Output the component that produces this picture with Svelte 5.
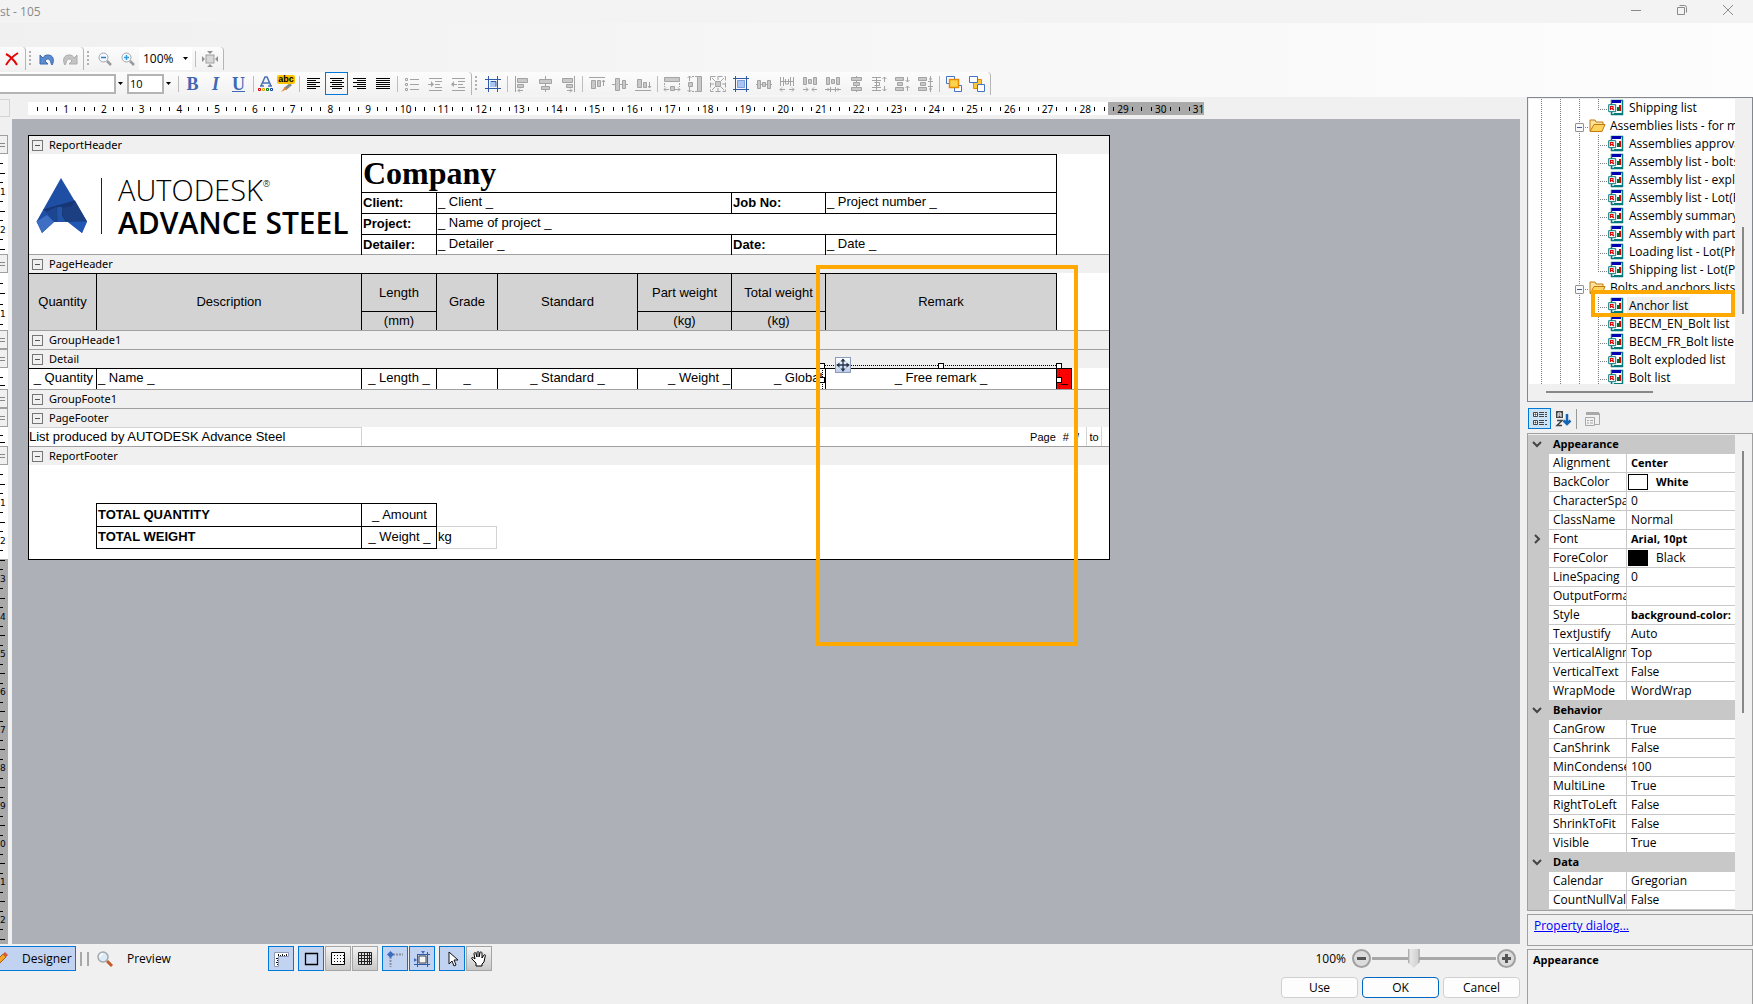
<script lang="ts">
	let zoom = 100;
	let selected = 'Anchor list';
	let mode = 'Designer';
	let align = 'align-center';

	const g = 'fill="#c9c9c9" stroke="#a3a3a3"';
	const l = 'fill="none" stroke="#a3a3a3"';
	const b = 'fill="none" stroke="#2f5aa8"';

	const icons: Record<string, string> = {
		delete: '<path d="M2 3 C6 5 10 9 13 14 M14 2 C9 5 5 9 2 14" fill="none" stroke="#e00808" stroke-width="2"/>',
		undo: '<path d="M1 4v9h8l-3-3c2-3 5-3 6 2l1 2c3-5 1-10-4-10-3 0-4 1-5 3z" fill="#5b8bd0" stroke="#3c68ad"/>',
		redo: '<path d="M15 4v9H7l3-3c-2-3-5-3-6 2l-1 2C0 9 2 4 7 4c3 0 4 1 5 3z" fill="#c4c4c4" stroke="#ababab"/>',
		'zoom-out':
			'<path d="M10 10l4 4" stroke="#9a9aa0" stroke-width="2.500"/><circle cx="6.500" cy="6.500" r="4.500" fill="#f6f9fd" stroke="#a0a4ae"/><path d="M4 6.500h5" stroke="#2f7fc0" stroke-width="1.500"/>',
		'zoom-in':
			'<path d="M10 10l4 4" stroke="#9a9aa0" stroke-width="2.500"/><circle cx="6.500" cy="6.500" r="4.500" fill="#f6f9fd" stroke="#a0a4ae"/><path d="M4 6.500h5M6.500 4v5" stroke="#2f9fe0" stroke-width="1.500"/>',
		fit: '<rect x="4" y="4" width="8" height="8" fill="#d8d8d8" stroke="#a0a0a0"/><path d="M5 0h6L8 3zM5 16h6l-3-3zM0 5v6l3-3zM16 5v6l-3-3z" fill="#8f8f8f"/>',
		color:
			'<path d="M3 10L7 1h2l4 9M5 7h6M2 10h4M10 10h4" fill="none" stroke="#4a72b8" stroke-width="1.600"/><path d="M.5 12.500h2v2h-2z" fill="#fff" stroke="#e00000"/><path d="M4.500 12.500h2v2h-2z" fill="#fff" stroke="#e0a800"/><path d="M8.500 12.500h2v2h-2z" fill="#fff" stroke="#0a8a0a"/><path d="M12.500 12.500h2v2h-2z" fill="#fff" stroke="#1040b0"/>',
		'align-left': '<path d="M1 2.500h13M1 4.500h9M1 6.500h13M1 8.500h9M1 10.500h13M1 12.500h9" stroke="#000"/>',
		'align-center': '<path d="M1 2.500h14M3 4.500h10M1 6.500h14M3 8.500h10M1 10.500h14M3 12.500h10" stroke="#000"/>',
		'align-right': '<path d="M1 2.500h13M5 4.500h9M1 6.500h13M5 8.500h9M1 10.500h13M5 12.500h9" stroke="#000"/>',
		justify: '<path d="M1 2.500h14M1 4.500h14M1 6.500h14M1 8.500h14M1 10.500h14M1 12.500h14" stroke="#000"/>',
		list: `<path d="M1.500 2.500h2v2h-2zM1.500 7.500h2v2h-2zM1.500 12.500h2v2h-2zM6 3.500h9M6 8.500h9M6 13.500h9" ${l}/>`,
		indent: `<path d="M2 2.500h13M8 5.500h7M8 8.500h5M8 11.500h7M2 14.500h13M1 8.500h5" ${l}/><path d="M4 5v6l3-2.500z" fill="#a3a3a3"/>`,
		outdent: `<path d="M2 2.500h13M8 5.500h7M8 8.500h5M8 11.500h7M2 14.500h13M3 8.500h4" ${l}/><path d="M4 5v6L1 8.500z" fill="#a3a3a3"/>`,
		snap: `<rect x="5" y="5" width="6" height="6" fill="#a9c4f0"/><path d="M0 3.500h16M0 12.500h16M3.500 0v16M12.500 0v16" ${b}/><path d="M6 5.500h5v5" ${b}/>`,
		'edge-left': `<path d="M1.500 0v16" ${l}/><path d="M3.500 2.500h10v4h-10zM3.500 8.500h6v3h-6z" ${g}/><path d="M4 14.500h5M6 12.500l-2 2 2 2" ${l}/>`,
		'edge-center': `<path d="M8.500 0v16" ${l}/><path d="M2.500 3.500h12v4h-12zM4.500 10.500h8v3h-8z" ${g}/>`,
		'edge-right': `<path d="M14.500 0v16" ${l}/><path d="M2.500 2.500h10v4h-10zM6.500 8.500h6v3h-6z" ${g}/><path d="M7 14.500h5M10 12.500l2 2-2 2" ${l}/>`,
		'edge-top': `<path d="M0 1.500h16M14.500 4v6M13 6l1.500-2L16 6" ${l}/><path d="M2.500 4.500h4v8h-4zM8.500 4.500h3v6h-3z" ${g}/>`,
		'edge-middle': `<path d="M0 8.500h16" ${l}/><path d="M3.500 2.500h4v12h-4zM10.500 4.500h3v8h-3z" ${g}/>`,
		'edge-bottom': `<path d="M0 14.500h16M14.500 6v6M13 10l1.500 2 1.500-2" ${l}/><path d="M2.500 3.500h4v8h-4zM8.500 6.500h3v5h-3z" ${g}/>`,
		'same-width': `<path d="M.5 1.500h15v4h-15z" ${g}/><path d="M.5 7v4M15.500 7v4" ${l} stroke-dasharray="2 1"/><path d="M6.500 10.500h4v4h-4z" ${g}/><path d="M0 13.500h5M11 13.500h5M2 11.500l-2 2 2 2M14 11.500l2 2-2 2" ${l}/>`,
		'same-height': `<path d="M10.500.5h4v15h-4z" ${g}/><path d="M5 .5h5M5 15.500h5" ${l} stroke-dasharray="2 1"/><path d="M1.500 6.500h4v4h-4z" ${g}/><path d="M2.500 0v5M2.500 11v5M.5 2l2-2 2 2M.5 14l2 2 2-2" ${l}/>`,
		'same-size': `<path d="M.5.5h15v15H.5z" ${l} stroke-dasharray="5 2"/><path d="M5.500 5.500h5v5h-5z" ${g}/><path d="M2 2l3 3M14 2l-3 3M2 14l3-3M14 14l-3-3M1 8h3M12 8h3M8 1v3M8 12v3" ${l}/>`,
		'fit-grid': `<rect x="4" y="4" width="8" height="8" fill="#a9c4f0"/><path d="M0 2.500h16M0 13.500h16M2.500 0v16M13.500 0v16" ${b}/><path d="M4.500 4.500h7v7h-7z" fill="none" stroke="#7ba0dc"/>`,
		'h-same': `<path d="M0 8.500h16" ${l}/><path d="M1.500 4.500h3v8h-3zM6.500 6.500h3v4h-3zM11.500 4.500h3v8h-3z" ${g}/>`,
		'h-more': `<path d="M1.500 1v9M14.500 1v9M4.500 1v9M11.500 1v9M1 5.500h14M6.500 3v5h3V3M1 13.500h5M10 13.500h5M3 11.500l-2 2 2 2M13 11.500l2 2-2 2" ${l}/>`,
		'h-less': `<path d="M1.500 1.500h3v7h-3zM6.500 3.500h3v4h-3zM11.500 1.500h3v7h-3z" ${g}/><path d="M1 13.500h5M10 13.500h5M4 11.500l2 2-2 2M12 11.500l-2 2 2 2" ${l}/>`,
		'h-none': `<path d="M1.500 1.500h3v7h-3zM6.500 3.500h3v4h-3zM11.500 1.500h3v7h-3z" ${g}/><path d="M0 13.500h16M5.500 11v5M10.500 11v5M3 12v3M13 12v3" ${l}/>`,
		'v-same': `<path d="M8.500 0v16" ${l}/><path d="M3.500 1.500h10v3h-10zM5.500 6.500h6v3h-6zM3.500 11.500h10v3h-10z" ${g}/>`,
		'v-more': `<path d="M1 1.500h9M1 14.500h9M1 4.500h9M1 11.500h9M5.500 1v14M3.500 6.500h5v3h-5M13.500 1v5M13.500 10v5M11.500 3l2-2 2 2M11.500 13l2 2 2-2" ${l}/>`,
		'v-less': `<path d="M1.500 1.500h8v3h-8zM3.500 6.500h5v3h-5zM1.500 11.500h8v3h-8z" ${g}/><path d="M13.500 1v5M13.500 10v5M11.500 4l2 2 2-2M11.500 12l2-2 2 2" ${l}/>`,
		'v-none': `<path d="M1.500 1.500h8v3h-8zM3.500 6.500h5v3h-5zM1.500 11.500h8v3h-8z" ${g}/><path d="M13.500 0v16M11 5.500h5M11 10.500h5M12 3h3M12 13h3" ${l}/>`,
		front:
			'<path d="M.5.5h8v7h-8zM8.500 9.500h7v6h-7z" fill="#fff" stroke="#4472c4"/><path d="M3.500 3.500h9v8h-9z" fill="#fcd34d" stroke="#e58a00" stroke-width="1.500"/>',
		back: '<path d="M4.500 3.500h8v9h-8z" fill="#fcc93d" stroke="#e58a00"/><path d="M.5.5h8v6h-8zM8.500 8.500h7v7h-7z" fill="#fff" stroke="#4472c4"/>',
		report:
			'<path d="M3.500.500h11v14h-11z" fill="#fff" stroke="#007a7a" stroke-width="1.500"/><path d="M4 0h9v3H4z" fill="#0000b0"/><path d="M.7 4.700h7v7h-7z" fill="#fff" stroke="#007a7a"/><path d="M2.500 10V6.500h2.500v2H3M4 8.500L6 10" fill="none" stroke="#e00000" stroke-width="1.200"/><path d="M9 7h2v4H9z" fill="#006b2d"/><path d="M11 5h2v6h-2z" fill="#e00000"/><path d="M6 13.500h8" stroke="#007a7a"/>',
		folder:
			'<path d="M1 13V2h5l1 2h7v3" fill="#ffe39b" stroke="#c07a10"/><path d="M1 13.500L5 6.500h11l-3 7z" fill="#ffd35c" stroke="#c07a10"/>',
		categorized:
			'<path d="M1.500 1.500h4v4h-4zM1.500 9.500h4v4h-4zM3.500 2.500v2M2.500 3.500h2M3.500 10.500v2M2.500 11.500h2" fill="#fff" stroke="#444"/><path d="M7 1.500h5M7 3.500h5M7 5.500h5M7 9.500h5M7 11.500h5M7 13.500h5M13 1.500h2M13 3.500h2M13 5.500h2M13 9.500h2M13 13.500h2" stroke="#444"/>',
		sorted:
			'<path d="M1 0h7v7H1z" fill="#444"/><path d="M3 6V2h3v4M3 4h3" fill="none" stroke="#fff"/><path d="M2 9.500h5L2 14.500h5" fill="none" stroke="#444" stroke-width="1.500"/><path d="M12 3v10M8.500 9.500L12 13l3.500-3.500" fill="none" stroke="#1565b5" stroke-width="2.500"/>',
		pages: '<path d="M4.500 2.500h11v11h-5" fill="none" stroke="#a8a8a8"/><path d="M2 1h13v3H2z" fill="#a8a8a8"/><path d="M1.500 6.500h9v8h-9z" fill="#f0f0f0" stroke="#a8a8a8"/><path d="M3 9.500h2M6 9.500h3M3 12h2M6 12h3" stroke="#a8a8a8"/>',
		pencil: '<path d="M1 15l2-5 7-7 3 3-7 7z" fill="#f5a32a" stroke="#a36410"/><path d="M10 3l2-2 3 3-2 2z" fill="#d9593c"/><path d="M1 15l1-3 2 2z" fill="#333"/>',
		search:
			'<path d="M10 10l5 5" stroke="#c25a2a" stroke-width="3"/><circle cx="6" cy="6" r="5" fill="#dcebf5" stroke="#a2a9ae" stroke-width="1.500"/><path d="M3 6a3 3 0 0 1 3-3" fill="none" stroke="#fff" stroke-width="1.500"/>',
		rulers:
			'<path d="M1.500 1.500h14v4h-10v10h-4z" fill="#fff" stroke="#8c98b4"/><path d="M5.500 5v-2M7.500 5V4M9.500 5V3M11.500 5V4M13.500 5V3M5 7.500H3M5 9.500H4M5 11.500H3M5 13.500H4" stroke="#111"/>',
		page: '<path d="M2.500 2.500h12v11h-12z" fill="none" stroke="#000" stroke-width="1.300"/>',
		dots: '<path d="M1.500 1.500h13v12h-13z" fill="#f8f8f8" stroke="#000"/><path d="M4 4.500h10M4 7.500h10M4 10.500h10" stroke="#000" stroke-dasharray="1 2"/>',
		grid: '<path d="M1.500 1.500h13v12h-13zM4.500 1v13M7.500 1v13M10.500 1v13M12.500 1v13M1 4.500h14M1 7.500h14M1 10.500h14" fill="#ddd" stroke="#222"/>',
		guides: '<path d="M3 3.500h13M3.500 3v13" stroke="#8890a0" stroke-width="2" stroke-dasharray="2 1"/><path d="M3.500 0L7 3.500 3.500 7 0 3.500z" fill="#3b6cc0"/>',
		frame: `<path d="M5 5h7v7H5z" fill="#f5f5f5" stroke="#444"/><path d="M0 13.500h16M13.500 1v15M3.500 3v13M3 3.500h13" ${b}/><path d="M7 0h4L9 3zM0 7v4l3-2z" fill="#3b6cc0"/>`,
		pointer: '<path d="M5 1v12l3-3 2 5 2-1-2-5h4z" fill="#fff" stroke="#111"/>',
		hand: '<path d="M5 15v-3L1 8c-1-2 1-2 3 0L3 3c0-2 2-2 2 0l1 3V2c0-2 2-2 2 0v4l1-4c0-2 2-1 2 0v5l2-3c1-1 2 0 1 2l-1 5-2 2v2z" fill="#fff" stroke="#000"/>',
		move: '<path d="M8 1v14M1 8h14" stroke="#26364f" stroke-width="1.500"/><path d="M5 4l3-3.500L11 4zM5 12l3 3.500 3-3.500zM4 5L.5 8 4 11zM12 5l3.500 3-3.500 3z" fill="#26364f"/>'
	};

	const alignTools = [
		['edge-left', 'edge-center', 'edge-right'],
		['edge-top', 'edge-middle', 'edge-bottom'],
		['same-width', 'same-height', 'same-size', 'fit-grid', 'h-same', 'h-more', 'h-less', 'h-none', 'v-same', 'v-more', 'v-less', 'v-none'],
		['front', 'back']
	];

	let viewTools = [
		[{ icon: 'rulers', on: true }],
		[
			{ icon: 'page', on: true },
			{ icon: 'dots', on: false },
			{ icon: 'grid', on: false }
		],
		[
			{ icon: 'guides', on: true },
			{ icon: 'frame', on: true }
		],
		[
			{ icon: 'pointer', on: true },
			{ icon: 'hand', on: false }
		]
	];

	// marks per band on the vertical ruler, four to a centimetre
	const bands = [
		{ marks: 10, size: 100 },
		{ marks: 5, size: 57 },
		{ marks: 0, size: 0 },
		{ marks: 2, size: 21 },
		{ marks: 0, size: 0 },
		{ marks: 2, size: 19 },
		{ marks: 50, size: 479 }
	];

	const tree = [
		{ label: 'Shipping list', last: true },
		{ label: 'Assemblies lists - for multiple', folder: true },
		{ label: 'Assemblies approval list' },
		{ label: 'Assembly list - bolts' },
		{ label: 'Assembly list - exploded' },
		{ label: 'Assembly list - Lot(Phase)' },
		{ label: 'Assembly summary list' },
		{ label: 'Assembly with parts list' },
		{ label: 'Loading list - Lot(Phase)' },
		{ label: 'Shipping list - Lot(Phase)', last: true },
		{ label: 'Bolts and anchors lists', folder: true },
		{ label: 'Anchor list' },
		{ label: 'BECM_EN_Bolt list' },
		{ label: 'BECM_FR_Bolt liste' },
		{ label: 'Bolt exploded list' },
		{ label: 'Bolt list' }
	];

	let groups = [
		{
			name: 'Appearance',
			open: true,
			rows: [
				{ name: 'Alignment', value: 'Center', bold: true },
				{ name: 'BackColor', value: 'White', bold: true, swatch: 'white' },
				{ name: 'CharacterSpacing', value: '0' },
				{ name: 'ClassName', value: 'Normal' },
				{ name: 'Font', value: 'Arial, 10pt', bold: true, nested: true },
				{ name: 'ForeColor', value: 'Black', swatch: 'black' },
				{ name: 'LineSpacing', value: '0' },
				{ name: 'OutputFormat', value: '' },
				{ name: 'Style', value: 'background-color:', bold: true },
				{ name: 'TextJustify', value: 'Auto' },
				{ name: 'VerticalAlignment', value: 'Top' },
				{ name: 'VerticalText', value: 'False' },
				{ name: 'WrapMode', value: 'WordWrap' }
			]
		},
		{
			name: 'Behavior',
			open: true,
			rows: [
				{ name: 'CanGrow', value: 'True' },
				{ name: 'CanShrink', value: 'False' },
				{ name: 'MinCondenseRate', value: '100' },
				{ name: 'MultiLine', value: 'True' },
				{ name: 'RightToLeft', value: 'False' },
				{ name: 'ShrinkToFit', value: 'False' },
				{ name: 'Visible', value: 'True' }
			]
		},
		{
			name: 'Data',
			open: true,
			rows: [
				{ name: 'Calendar', value: 'Gregorian' },
				{ name: 'CountNullValues', value: 'False' }
			]
		}
	];
</script>

{#snippet icon(name)}
	<svg class="icon" viewBox="0 0 16 16" width="16" height="16" aria-hidden="true">{@html icons[name]}</svg>
{/snippet}

{#snippet band(name)}
	<h2 class="band"><button type="button" aria-label="Collapse {name}"></button>{name}</h2>
{/snippet}

{#snippet arrow()}
	<svg class="arrow" width="5" height="3" aria-hidden="true"><path d="M0 0h5L2.500 3z" /></svg>
{/snippet}

<div class="window">
	<header class="title">
		<span class="caption">st - 105</span>
		<div class="controls">
			<button type="button" aria-label="Minimize"><svg width="12" height="12"><path d="M1 6.500h10" /></svg></button>
			<button type="button" aria-label="Restore">
				<svg width="12" height="12"><path d="M1.500 3.500h7v7h-7zM3.500 1.500h5a2 2 0 0 1 2 2v5" /></svg>
			</button>
			<button type="button" aria-label="Close"><svg width="12" height="12"><path d="M1 1l10 10M11 1L1 11" /></svg></button>
		</div>
	</header>

	<div class="toolbars">
		<div class="toolbar">
			<div class="tools first">
				<button type="button" aria-label="Delete">{@render icon('delete')}</button>
			</div>
			<div class="tools">
				<button type="button" aria-label="Undo">{@render icon('undo')}</button>
				<button type="button" aria-label="Redo">{@render icon('redo')}</button>
			</div>
			<div class="tools">
				<button type="button" aria-label="Zoom out">{@render icon('zoom-out')}</button>
				<button type="button" aria-label="Zoom in">{@render icon('zoom-in')}</button>
				<div class="combo zoom-combo">
					<select aria-label="Zoom"><option>100%</option></select>{@render arrow()}
				</div>
				<i class="sep"></i>
				<button type="button" aria-label="Fit">{@render icon('fit')}</button>
			</div>
		</div>
		<div class="toolbar">
			<div class="tools format">
				<div class="combo font-combo">
					<select aria-label="Font name"><option></option></select>{@render arrow()}
				</div>
				<div class="combo size-combo">
					<select aria-label="Font size"><option>10</option></select>{@render arrow()}
				</div>
				<i class="sep"></i>
				<button type="button" class="letter">B</button>
				<button type="button" class="letter italic">I</button>
				<button type="button" class="letter under">U</button>
				<i class="sep"></i>
				<button type="button" class="slim" aria-label="Text color">{@render icon('color')}</button>
				<button type="button" class="slim mark"
					><span>abc</span><svg width="12" height="8"><path d="M11 0L5 5" stroke="#888" stroke-width="3" /><path d="M5 3l2 2-6 3z" fill="#e8872a" /></svg></button
				>
				<i class="sep"></i>
				{#each ['align-left', 'align-center', 'align-right', 'justify'] as name}
					<button type="button" class:active={align === name} aria-label={name} on:click={() => (align = name)}>{@render icon(name)}</button>
				{/each}
				<i class="sep"></i>
				{#each ['list', 'indent', 'outdent'] as name}
					<button type="button" aria-label={name}>{@render icon(name)}</button>
				{/each}
			</div>
			<div class="tools">
				<button type="button" aria-label="Snap to grid">{@render icon('snap')}</button>
				{#each alignTools as set}
					<i class="sep"></i>
					{#each set as name}
						<button type="button" aria-label={name}>{@render icon(name)}</button>
					{/each}
				{/each}
			</div>
		</div>
	</div>

	<div class="body">
		<main>
			<div class="ruler-row">
				<div class="corner"></div>
				<div class="ruler">
					{#each Array(124) as _, i}
						<span class="mark-h">
							{#if i % 4 === 3}{(i + 1) / 4}{:else}<i></i>{/if}
						</span>
					{/each}
				</div>
			</div>

			<div class="work">
				<div class="v-ruler">
					{#each bands as { marks, size }, n}
						<div class="v-head"></div>
						<div class="v-band" class:tail={n === 6} style="height: {size}px">
							{#each Array(marks) as _, i}
								<span class="mark-v">
									{#if i % 4 === 3}{((i + 1) / 4) % 10}{:else}<i class:long={i % 4 === 1}></i>{/if}
								</span>
							{/each}
						</div>
					{/each}
				</div>

				<div class="canvas">
					<div class="paper">
						{@render band('ReportHeader')}
						<section class="report-header">
							<div class="logo">
								<svg width="52" height="56" viewBox="0 0 52 56" aria-hidden="true">
									<path d="M25 0L51 43.500 46 55 32 44H18L6 55 .5 43.500z" fill="#1f4fa5" />
									<path d="M7 31.500L39 22.500 51 43.500 32 44 26 38 21 33z" fill="#1b3f80" />
									<path d="M7 31.500L39 22.500 36 28 26 30 27 39 32 44 18 39z" fill="#173774" />
									<path d="M10 34L20 29 22 35 29 44H18z" fill="#1c4690" />
									<path d="M21 29h5v9l4 6h-8z" fill="#2455a8" />
									<path d="M.5 43.500L11 37 18 44 6 55z" fill="#3f6fc4" />
									<path d="M32 44L51 43.500 46 55z" fill="#2258b4" />
								</svg>
								<i></i>
								<div class="brand"><span>AUTODESK<sup>®</sup></span><strong>ADVANCE STEEL</strong></div>
							</div>
							<table class="company">
								<colgroup><col class="w75" /><col class="w295" /><col class="w94" /><col class="w231" /></colgroup>
								<tbody>
									<tr class="name"><td colspan="4">Company</td></tr>
									<tr><th>Client:</th><td>_ Client _</td><th>Job No:</th><td>_ Project number _</td></tr>
									<tr><th>Project:</th><td colspan="3">_ Name of project _</td></tr>
									<tr><th>Detailer:</th><td>_ Detailer _</td><th>Date:</th><td>_ Date _</td></tr>
								</tbody>
							</table>
						</section>

						{@render band('PageHeader')}
						<table class="columns head">
							<colgroup>
								<col class="w67" /><col class="w265" /><col class="w75" /><col class="w61" /><col class="w140" /><col class="w94" /><col
									class="w94"
								/><col class="w231" />
							</colgroup>
							<thead>
								<tr class="tall">
									<th rowspan="2">Quantity</th>
									<th rowspan="2">Description</th>
									<th>Length</th>
									<th rowspan="2">Grade</th>
									<th rowspan="2">Standard</th>
									<th>Part weight</th>
									<th>Total weight</th>
									<th rowspan="2">Remark</th>
								</tr>
								<tr><th>(mm)</th><th>(kg)</th><th>(kg)</th></tr>
							</thead>
						</table>

						{@render band('GroupHeade1')}
						{@render band('Detail')}
						<table class="columns detail">
							<colgroup>
								<col class="w67" /><col class="w265" /><col class="w75" /><col class="w61" /><col class="w140" /><col class="w94" /><col
									class="w94"
								/><col class="w231" /><col class="w15" />
							</colgroup>
							<tbody>
								<tr>
									<td class="right">_ Quantity</td>
									<td class="left">_ Name _</td>
									<td>_ Length _</td>
									<td>_</td>
									<td>_ Standard _</td>
									<td class="right tight">_ Weight _</td>
									<td class="left cut">_ Global w</td>
									<td>_ Free remark _</td>
									<td class="red">_</td>
								</tr>
							</tbody>
						</table>

						{@render band('GroupFoote1')}
						{@render band('PageFooter')}
						<section class="page-footer">
							<span class="produced">List produced by AUTODESK Advance Steel</span>
							<span class="pager"><span>Page</span><span>#</span><span>/</span><span class="total">to</span></span>
						</section>

						{@render band('ReportFooter')}
						<section class="report-footer">
							<table class="totals">
								<colgroup><col class="w265" /><col class="w76" /><col class="w60" /></colgroup>
								<tbody>
									<tr><th>TOTAL QUANTITY</th><td>_ Amount</td></tr>
									<tr><th>TOTAL WEIGHT</th><td>_ Weight _</td><td class="unit">kg</td></tr>
								</tbody>
							</table>
						</section>

						<div class="selection">
							<i class="nw"></i><i class="n"></i><i class="ne"></i><i class="w"></i><i class="e"></i>
							<span class="mover">{@render icon('move')}</span>
						</div>
						<div class="callout"></div>
					</div>
				</div>
			</div>

			<footer>
				<div class="status">
					<button type="button" class="tab designer" class:current={mode === 'Designer'} on:click={() => (mode = 'Designer')}>
						{@render icon('pencil')}Designer
					</button>
					<i class="bar"></i><i class="bar"></i>
					<button type="button" class="tab preview" class:current={mode === 'Preview'} on:click={() => (mode = 'Preview')}>
						{@render icon('search')}Preview
					</button>
					<div class="view-tools">
						{#each viewTools as set}
							<div>
								{#each set as tool}
									<button type="button" class:on={tool.on} aria-label={tool.icon} on:click={() => (tool.on = !tool.on)}
										>{@render icon(tool.icon)}</button
									>
								{/each}
							</div>
						{/each}
					</div>
					<div class="zoom">
						<label for="zoom">{zoom}%</label>
						<button type="button" aria-label="Zoom out" on:click={() => (zoom -= 10)}></button>
						<input id="zoom" type="range" min="10" max="290" bind:value={zoom} />
						<button type="button" class="plus" aria-label="Zoom in" on:click={() => (zoom += 10)}></button>
					</div>
				</div>
				<div class="actions">
					<button type="button">Use</button>
					<button type="button" class="default">OK</button>
					<button type="button">Cancel</button>
				</div>
			</footer>
		</main>

		<aside>
			<div class="tree">
				<ul>
					{#each tree as { label, folder, last }}
						<li>
							<i class="guide"></i><i class="guide"></i>
							{#if folder}
								<i class="guide branch"><b></b></i>
							{:else}
								<i class="guide"></i><i class="guide branch" class:last></i>
							{/if}
							{@render icon(folder ? 'folder' : 'report')}
							<button type="button" class:selected={selected === label} on:click={() => (selected = label)}>{label}</button>
						</li>
					{/each}
				</ul>
				<i class="thumb-v"></i>
				<i class="thumb-h"></i>
				<div class="callout"></div>
			</div>

			<div class="prop-tools">
				<button type="button" class="active" aria-label="Categorized">{@render icon('categorized')}</button>
				<button type="button" aria-label="Alphabetical">{@render icon('sorted')}</button>
				<i></i>
				<button type="button" aria-label="Property pages">{@render icon('pages')}</button>
			</div>

			<div class="props">
				<table>
					<colgroup><col class="gutter" /><col class="names" /><col /></colgroup>
					<tbody>
						{#each groups as group}
							<tr class="group">
								<td>
									<button type="button" aria-label="Toggle {group.name}" on:click={() => (group.open = !group.open)}>
										<svg width="10" height="10"><path d="M1 3l4 4 4-4" /></svg>
									</button>
								</td>
								<th colspan="2">{group.name}</th>
							</tr>
							{#if group.open}
								{#each group.rows as row}
									<tr>
										<td>{#if row.nested}<svg width="10" height="10"><path d="M3 1l4 4-4 4" /></svg>{/if}</td>
										<th>{row.name}</th>
										<td class:bold={row.bold}>
											{#if row.swatch}<i class="swatch" style="background: {row.swatch}"></i>{/if}{row.value}
										</td>
									</tr>
								{/each}
							{/if}
						{/each}
					</tbody>
				</table>
				<i class="thumb-v"></i>
			</div>

			<div class="link-box"><a href="#properties">Property dialog...</a></div>
			<div class="help">Appearance</div>
		</aside>
	</div>
</div>

<style>
	:global(body) {
		margin: 0;
		overflow: hidden;
	}

	.window {
		display: flex;
		flex-direction: column;
		height: 100vh;
		background: #f0f0f0;
		color: #000;
		font: 12px/16px 'Open Sans', sans-serif;
	}

	.window :global(*) {
		box-sizing: border-box;
	}

	button,
	select,
	input {
		margin: 0;
		padding: 0;
		border: 0;
		background: none;
		color: inherit;
		font: inherit;
	}

	.icon {
		display: block;
		flex: none;
		overflow: visible;
	}

	/* title bar */
	.title {
		display: flex;
		flex: none;
		justify-content: space-between;
		height: 23px;
		background: #f3f3f3;
		color: #8a8a8a;
	}

	.caption {
		line-height: 24px;
	}

	.controls {
		display: flex;
		padding-right: 2px;
	}

	.controls button {
		display: grid;
		place-items: center;
		width: 46px;
		height: 20px;
	}

	.controls svg {
		fill: none;
		stroke: #8a8a8a;
	}

	/* toolbars */
	.toolbars {
		flex: none;
		height: 74px;
		padding-top: 24px;
		background: linear-gradient(90deg, #f0f0f0, #fdfdfd);
	}

	.toolbar {
		display: flex;
		height: 23px;
		margin-bottom: 2px;
	}

	.tools {
		display: flex;
		align-items: center;
		padding: 0 2px 0 9px;
		border-right: 1px solid #b5b5b5;
		border-radius: 0 4px 0 0;
		background:
			repeating-linear-gradient(#b0b0b0 0 2px, transparent 2px 4px) 3px 4px / 2px 14px no-repeat,
			linear-gradient(#fcfcfc, #f2f2f2);
	}

	.tools.first,
	.tools.format {
		padding-left: 0;
		background: linear-gradient(#fcfcfc, #f2f2f2);
	}

	.tools button {
		display: flex;
		align-items: center;
		justify-content: center;
		width: 23px;
		height: 23px;
	}

	.tools button.slim {
		width: 20px;
	}

	.tools button.active {
		border: 1px solid #0078d7;
	}

	.sep {
		flex: none;
		width: 1px;
		height: 16px;
		margin: 0 2px 0 3px;
		background: #bdbdbd;
	}

	.combo {
		display: flex;
		align-items: center;
	}

	.combo select {
		flex: 1;
		min-width: 0;
		height: 20px;
		padding-left: 1px;
		border: 2px solid #b4b4b4;
		appearance: none;
		background: #fff;
	}

	.arrow {
		margin: 0 4px 0 2px;
	}

	.zoom-combo {
		width: 53px;
		height: 23px;
		background: #fff;
	}

	.zoom-combo select {
		border: 0;
		padding-left: 4px;
	}

	.font-combo {
		width: 127px;
	}

	.font-combo select {
		border-left: 0;
	}

	.size-combo {
		width: 48px;
	}

	.size-combo select {
		font-size: 11px;
	}

	.tools button.letter {
		color: #3f68b4;
		font: bold 18px/20px 'Liberation Serif', serif;
	}

	.tools button.italic {
		font-style: italic;
	}

	.tools button.under {
		text-decoration: underline;
	}

	.tools button.mark {
		flex-direction: column;
	}

	.mark span {
		height: 9px;
		padding: 0 1px;
		border-radius: 2px;
		background: #ffc400;
		font: bold 9px/8px 'Liberation Sans', sans-serif;
	}

	/* layout of the two halves */
	.body {
		display: flex;
		flex: 1;
		min-height: 0;
	}

	main {
		display: flex;
		flex: 1;
		flex-direction: column;
		min-width: 0;
	}

	aside {
		display: flex;
		flex: none;
		flex-direction: column;
		width: 226px;
		margin-left: 7px;
	}

	/* rulers */
	.ruler-row {
		display: flex;
		flex: none;
		align-items: center;
		height: 22px;
	}

	.corner {
		width: 10px;
		height: 18px;
		margin-right: 18px;
		border: 1px solid #d4d4d4;
		border-left: 0;
	}

	.ruler {
		display: flex;
		width: 1176px;
		height: 13px;
		padding-left: 5px;
		background: linear-gradient(90deg, #fff 1080px, #a9a9a9 0);
		font: 10px/16px 'Noto Sans', sans-serif;
	}

	.mark-h {
		display: flex;
		flex: 1;
		align-items: center;
		justify-content: center;
		width: 0;
		height: 15px;
	}

	.mark-h i {
		width: 1px;
		height: 4px;
		background: #000;
	}

	.work {
		display: flex;
		flex: 1;
		min-height: 0;
	}

	.v-ruler {
		width: 8px;
		margin-right: 4px;
		padding-top: 16px;
		overflow: hidden;
		font: 9px/9px 'DejaVu Sans', sans-serif;
	}

	.v-head {
		height: 19px;
		border: solid #a0a0a0;
		border-width: 1px 1px 1px 0;
		background: linear-gradient(#888, #888) 0 7px / 5px 1px no-repeat, linear-gradient(#888, #888) 0 10px / 5px 1px no-repeat;
	}

	.v-band {
		display: flex;
		flex-direction: column;
		padding-top: 5px;
		background: #fff;
	}

	.v-band:empty {
		padding: 0;
	}

	.v-band.tail {
		background: linear-gradient(#fff 94px, #a9a9a9 0);
	}

	.mark-v {
		display: flex;
		flex: 1;
		align-items: center;
		height: 0;
	}

	.mark-v i {
		width: 3px;
		height: 1px;
		background: #000;
	}

	.mark-v i.long {
		width: 5px;
	}

	/* report page */
	.canvas {
		flex: 1;
		min-width: 0;
		padding: 16px;
		overflow: hidden;
		background: #adb1b7;
	}

	.paper {
		position: relative;
		width: 1082px;
		border: 1px solid #000;
		background: #fff;
		font: 13px/16px 'Liberation Sans', Arial, sans-serif;
	}

	.band {
		display: flex;
		align-items: center;
		height: 19px;
		margin: 0;
		padding-left: 3px;
		border-top: 1px solid #a0a0a0;
		background: #f0f0f0;
		font: 11px/16px 'Noto Sans', sans-serif;
	}

	.band:first-child {
		height: 18px;
		border-top: 0;
	}

	.band button {
		width: 11px;
		height: 11px;
		margin-right: 6px;
		border: 1px solid #777;
		background: linear-gradient(#555, #555) center / 5px 1px no-repeat;
	}

	table {
		border-spacing: 0;
		table-layout: fixed;
	}

	th,
	td {
		padding: 0;
		overflow: hidden;
		font-weight: normal;
		white-space: nowrap;
	}

	.w15 {
		width: 15px;
	}
	.w60 {
		width: 60px;
	}
	.w61 {
		width: 61px;
	}
	.w67 {
		width: 67px;
	}
	.w75 {
		width: 75px;
	}
	.w76 {
		width: 76px;
	}
	.w94 {
		width: 94px;
	}
	.w140 {
		width: 140px;
	}
	.w231 {
		width: 231px;
	}
	.w265 {
		width: 265px;
	}
	.w295 {
		width: 295px;
	}

	.report-header {
		display: flex;
		height: 100px;
	}

	.logo {
		display: flex;
		flex: none;
		align-items: center;
		width: 332px;
		padding: 4px 0 0 7px;
	}

	.logo i {
		width: 1px;
		height: 56px;
		margin: 0 16px 0 13px;
		background: #222;
	}

	.brand {
		font: 30px/33px 'Open Sans', sans-serif;
		white-space: nowrap;
	}

	.brand span {
		display: block;
		font-size: 29px;
		font-weight: 300;
	}

	.brand strong {
		font-weight: 600;
	}

	.brand sup {
		font-size: 9px;
		line-height: 0;
		vertical-align: 14px;
	}

	.company {
		width: 696px;
		height: 100px;
		border-right: 1px solid #000;
	}

	.company th,
	.company td {
		height: 21px;
		padding-left: 1px;
		border-top: 1px solid #000;
		border-left: 1px solid #000;
		text-align: left;
	}

	.company td {
		padding-bottom: 2px;
	}

	.company th {
		font-weight: bold;
	}

	.company .name td {
		height: 38px;
		font: bold 32px/34px 'Liberation Serif', serif;
	}

	.columns th,
	.columns td {
		border-top: 1px solid #000;
		border-left: 1px solid #000;
		text-align: center;
	}

	.columns th:first-child[rowspan],
	.columns td:first-child {
		border-left: 0;
	}

	.head {
		width: 1028px;
		border-right: 1px solid #000;
		background: #d3d3d3;
	}

	.head th {
		height: 19px;
	}

	.head .tall th {
		height: 38px;
	}

	.detail {
		width: 1043px;
		border-right: 1px solid #000;
	}

	.detail td {
		height: 21px;
		padding-bottom: 2px;
	}

	.detail .left {
		padding-left: 1px;
		text-align: left;
	}

	.detail .right {
		padding-right: 3px;
		text-align: right;
	}

	.detail .tight {
		padding-right: 1px;
	}

	.detail .cut {
		padding-left: 42px;
	}

	.detail .red {
		background: #f00;
	}

	.page-footer {
		display: flex;
		justify-content: space-between;
		height: 19px;
	}

	.produced {
		width: 333px;
		border: solid #d3d3d3;
		border-width: 1px 1px 0 0;
		line-height: 18px;
	}

	.pager {
		display: flex;
		gap: 7px;
		padding-right: 7px;
		font-size: 11px;
		line-height: 20px;
	}

	.pager .total {
		width: 16px;
		border: solid #d3d3d3;
		border-width: 0 1px;
		text-align: center;
	}

	.report-footer {
		padding: 38px 0 10px 67px;
	}

	.totals {
		width: 401px;
	}

	.totals th,
	.totals td {
		height: 23px;
		padding: 0 0 1px 1px;
		border-top: 1px solid #000;
		border-left: 1px solid #000;
		text-align: center;
	}

	.totals th {
		font-weight: bold;
		text-align: left;
	}

	.totals td:nth-child(2) {
		border-right: 1px solid #000;
	}

	.totals tr:last-child > * {
		border-bottom: 1px solid #000;
	}

	.totals tr:last-child .unit {
		border: 1px solid #d3d3d3;
		border-left: 0;
		text-align: left;
	}

	/* drawn over the page */
	.selection {
		position: absolute;
		top: 229px;
		left: 793px;
		width: 238px;
		height: 24px;
		border: 1px dotted #000;
		border-bottom: 0;
	}

	.selection i {
		position: absolute;
		width: 6px;
		height: 6px;
		border: 1px solid #000;
		background: #fff;
	}

	.nw,
	.n,
	.ne {
		top: -3px;
	}

	.w,
	.e {
		top: 11px;
	}

	.nw,
	.w {
		left: -4px;
	}

	.n {
		left: 115px;
	}

	.ne,
	.e {
		right: -3px;
	}

	.mover {
		position: absolute;
		top: -9px;
		left: 12px;
		border: 1px solid #8c9cb8;
		background: linear-gradient(#fff, #b9cbe8);
	}

	.mover .icon {
		width: 14px;
		height: 14px;
	}

	.callout {
		position: absolute;
		border: 4px solid #ffa900;
	}

	.paper .callout {
		top: 129px;
		left: 787px;
		width: 262px;
		height: 381px;
	}

	/* bottom bars */
	footer {
		flex: none;
		height: 60px;
	}

	.status {
		display: flex;
		align-items: center;
		height: 29px;
	}

	.tab {
		display: flex;
		align-items: center;
		height: 25px;
		gap: 14px;
	}

	.designer {
		gap: 13px;
		width: 76px;
		margin-right: 4px;
		border: 1px solid transparent;
		border-left: 0;
	}

	.designer .icon {
		margin-left: -7px;
	}

	.tab.current {
		border-color: #0078d7;
		background: #c1d3f0;
	}

	.bar {
		width: 2px;
		height: 14px;
		margin-right: 5px;
		background: #a8a8a8;
	}

	.preview {
		width: 73px;
		margin: 0 98px 0 3px;
	}

	.view-tools {
		display: flex;
		gap: 4px;
		margin-right: auto;
	}

	.view-tools div {
		display: flex;
		gap: 1px;
	}

	.view-tools button {
		display: grid;
		place-items: center;
		width: 26px;
		height: 25px;
		border: 1px solid #a5a5a5;
		background: linear-gradient(#f2f2f2, #c8c8c8);
	}

	.view-tools button.on {
		border-color: #0078d7;
		background: #c1d3f0;
	}

	.zoom {
		display: flex;
		align-items: center;
		padding-right: 4px;
	}

	.zoom label {
		margin-right: 6px;
	}

	.zoom button {
		width: 19px;
		height: 19px;
		border: 2px solid #a0a0a0;
		border-radius: 50%;
		background: linear-gradient(#555, #555) center / 9px 3px no-repeat, #dcdcdc;
	}

	.zoom .plus {
		background: linear-gradient(#555, #555) center / 9px 3px no-repeat, linear-gradient(#555, #555) center / 3px 9px no-repeat, #dcdcdc;
	}

	.zoom input {
		appearance: none;
		width: 126px;
		height: 19px;
		background: linear-gradient(#a8a8a8, #a8a8a8) center / 124px 3px no-repeat;
	}

	.zoom input::-webkit-slider-thumb {
		appearance: none;
		width: 12px;
		height: 19px;
		background: linear-gradient(90deg, #a0a0a0, #e6e6e6 20%, #d2d2d2 80%, #909090);
		clip-path: polygon(0 0, 100% 0, 100% 70%, 50% 100%, 0 70%);
	}

	.actions {
		display: flex;
		justify-content: flex-end;
		gap: 4px;
		padding-top: 4px;
	}

	.actions button {
		width: 77px;
		height: 21px;
		border: 1px solid #d0d0d0;
		border-radius: 4px;
		background: #fdfdfd;
	}

	.actions .default {
		border-color: #0067c0;
	}

	/* report tree */
	.tree {
		position: relative;
		flex: none;
		height: 305px;
		padding: 1px 17px 17px 1px;
		border: 1px solid #828790;
		overflow: hidden;
	}

	.tree ul {
		height: 285px;
		margin: 0;
		padding: 0 0 0 3px;
		overflow: hidden;
		background: #fff;
		list-style: none;
	}

	.tree li {
		display: flex;
		align-items: center;
		height: 18px;
	}

	.tree li button {
		flex: none;
		margin-left: 3px;
		padding: 0 2px;
		line-height: 18px;
		white-space: nowrap;
	}

	.tree li .selected {
		background: #f0f0f0;
	}

	.guide {
		position: relative;
		flex: none;
		width: 19px;
		height: 18px;
		background: repeating-linear-gradient(#808080 0 1px, transparent 1px 2px) 9px 0 / 1px 18px no-repeat;
	}

	.guide.branch {
		background:
			repeating-linear-gradient(#808080 0 1px, transparent 1px 2px) 9px 0 / 1px 18px no-repeat,
			repeating-linear-gradient(90deg, #808080 0 1px, transparent 1px 2px) 9px 10px / 10px 1px no-repeat;
	}

	.guide.last {
		background-size:
			1px 10px,
			10px 1px;
	}

	.guide b {
		position: absolute;
		top: 6px;
		left: 5px;
		width: 9px;
		height: 9px;
		border: 1px solid #919191;
		border-radius: 1px;
		background: linear-gradient(#3c5fa8, #3c5fa8) center / 5px 1px no-repeat, #fafafa;
	}

	.thumb-v,
	.thumb-h {
		position: absolute;
		background: #888;
	}

	.thumb-v {
		right: 8px;
		width: 2px;
	}

	.tree .thumb-v {
		top: 129px;
		height: 87px;
	}

	.thumb-h {
		bottom: 8px;
		left: 18px;
		width: 107px;
		height: 2px;
	}

	.tree .callout {
		top: 192px;
		right: 17px;
		left: 63px;
		height: 27px;
	}

	/* property grid */
	.prop-tools {
		display: flex;
		flex: none;
		align-items: center;
		height: 31px;
		padding: 2px 0 0 1px;
	}

	.prop-tools button {
		display: grid;
		place-items: center;
		width: 23px;
		height: 21px;
	}

	.prop-tools .active {
		border: 1px solid #0078d7;
		background: #cce4f7;
	}

	.prop-tools i {
		width: 1px;
		height: 20px;
		margin: 0 3px 0 2px;
		background: #999;
	}

	.props {
		position: relative;
		flex: 1;
		min-height: 0;
		padding: 1px 17px 0 0;
		border: 1px solid #a0a0a0;
		overflow: hidden;
	}

	.props table {
		width: 100%;
	}

	.gutter {
		width: 21px;
	}

	.names {
		width: 78px;
	}

	.props th,
	.props td {
		height: 19px;
		padding-left: 4px;
		border-bottom: 1px solid #c8c8c8;
		background: #fff;
		line-height: 18px;
		text-align: left;
	}

	.props th {
		border-right: 1px solid #c8c8c8;
	}

	.props td:first-child,
	.props .group th {
		background: #c8c8c8;
	}

	.props .group th,
	.props .bold,
	.help {
		font-weight: bold;
		font-size: 11px;
	}

	.props svg {
		display: block;
		fill: none;
		stroke: #444;
		stroke-width: 2;
	}

	.props button {
		display: block;
	}

	.swatch {
		display: inline-block;
		width: 20px;
		height: 16px;
		margin: 1px 8px 0 -3px;
		border: 1px solid #000;
		vertical-align: top;
	}

	.props .thumb-v {
		top: 17px;
		height: 262px;
	}

	.link-box,
	.help {
		flex: none;
		margin-top: 3px;
		border: 1px solid #a0a0a0;
	}

	.link-box {
		height: 32px;
		padding: 3px 6px;
	}

	.link-box a {
		color: #00f;
	}

	.help {
		height: 55px;
		padding: 2px 5px;
		border-bottom: 0;
	}
</style>
